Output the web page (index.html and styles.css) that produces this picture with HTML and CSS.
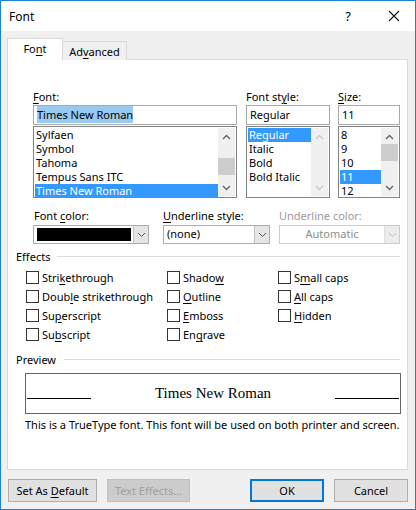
FILE: index.html
```html
<!DOCTYPE html>
<html>
<head>
<meta charset="utf-8">
<link rel="stylesheet" href="styles.css">
</head>
<body>
<div class="window">
  <div class="titlebar">
    <span class="title">Font</span>
    <span class="help">?</span>
    <svg class="close" width="12" height="12" viewBox="0 0 12 12"><path d="M1 1 L11 11 M11 1 L1 11" stroke="#111" stroke-width="1.1" fill="none"/></svg>
  </div>
  <div class="body">
    <div class="tabs">
      <div class="tab tab-active"><span>Fo<u>n</u>t</span></div>
      <div class="tab"><span>Ad<u>v</u>anced</span></div>
    </div>
    <div class="panel">
      <div class="row1">
        <div class="col col-font">
          <div class="label"><u>F</u>ont:</div>
          <div class="field"><span class="sel-text">Times New Roman</span></div>
          <div class="list">
            <div class="items">
              <div class="item">Sylfaen</div>
              <div class="item">Symbol</div>
              <div class="item">Tahoma</div>
              <div class="item">Tempus Sans ITC</div>
              <div class="item selected">Times New Roman</div>
            </div>
            <div class="scroll">
              <svg class="arrow" width="9" height="6" viewBox="0 0 9 6"><path d="M1 5 L4.5 1.5 L8 5" stroke="#606060" stroke-width="1.3" fill="none"/></svg>
              <div class="track"><div class="thumb thumb-font"></div></div>
              <svg class="arrow" width="9" height="6" viewBox="0 0 9 6"><path d="M1 1 L4.5 4.5 L8 1" stroke="#606060" stroke-width="1.3" fill="none"/></svg>
            </div>
          </div>
        </div>
        <div class="col col-style">
          <div class="label">Font st<u>y</u>le:</div>
          <div class="field">Regular</div>
          <div class="list">
            <div class="items">
              <div class="item selected">Regular</div>
              <div class="item">Italic</div>
              <div class="item">Bold</div>
              <div class="item">Bold Italic</div>
            </div>
            <div class="scroll">
              <svg class="arrow" width="9" height="6" viewBox="0 0 9 6"><path d="M1 5 L4.5 1.5 L8 5" stroke="#c8c8c8" stroke-width="1.3" fill="none"/></svg>
              <div class="track"></div>
              <svg class="arrow" width="9" height="6" viewBox="0 0 9 6"><path d="M1 1 L4.5 4.5 L8 1" stroke="#c8c8c8" stroke-width="1.3" fill="none"/></svg>
            </div>
          </div>
        </div>
        <div class="col col-size">
          <div class="label"><u>S</u>ize:</div>
          <div class="field">11</div>
          <div class="list">
            <div class="items">
              <div class="item">8</div>
              <div class="item">9</div>
              <div class="item">10</div>
              <div class="item selected">11</div>
              <div class="item">12</div>
            </div>
            <div class="scroll">
              <svg class="arrow" width="9" height="6" viewBox="0 0 9 6"><path d="M1 5 L4.5 1.5 L8 5" stroke="#606060" stroke-width="1.3" fill="none"/></svg>
              <div class="track"><div class="thumb thumb-size"></div></div>
              <svg class="arrow" width="9" height="6" viewBox="0 0 9 6"><path d="M1 1 L4.5 4.5 L8 1" stroke="#606060" stroke-width="1.3" fill="none"/></svg>
            </div>
          </div>
        </div>
      </div>

      <div class="row2">
        <div class="col col-color">
          <div class="label">Font <u>c</u>olor:</div>
          <div class="combo">
            <div class="combo-value"><div class="swatch"></div></div>
            <div class="combo-btn"><svg width="9" height="6" viewBox="0 0 9 6"><path d="M1 1 L4.5 4.5 L8 1" stroke="#555" stroke-width="1" fill="none"/></svg></div>
          </div>
        </div>
        <div class="col col-ustyle">
          <div class="label"><u>U</u>nderline style:</div>
          <div class="combo">
            <div class="combo-value combo-text">(none)</div>
            <div class="combo-btn"><svg width="9" height="6" viewBox="0 0 9 6"><path d="M1 1 L4.5 4.5 L8 1" stroke="#555" stroke-width="1" fill="none"/></svg></div>
          </div>
        </div>
        <div class="col col-ucolor">
          <div class="label disabled">Underline color:</div>
          <div class="combo combo-disabled">
            <div class="combo-value combo-center">Automatic</div>
            <div class="combo-btn"><svg width="9" height="6" viewBox="0 0 9 6"><path d="M1 1 L4.5 4.5 L8 1" stroke="#bdbdbd" stroke-width="1" fill="none"/></svg></div>
          </div>
        </div>
      </div>

      <div class="group-head head-effects"><span>Effects</span><div class="rule"></div></div>
      <div class="checks">
        <div class="check"><span class="box"></span><span>Stri<u>k</u>ethrough</span></div>
        <div class="check"><span class="box"></span><span>Shado<u>w</u></span></div>
        <div class="check"><span class="box"></span><span>S<u>m</u>all caps</span></div>
        <div class="check"><span class="box"></span><span>Doub<u>l</u>e strikethrough</span></div>
        <div class="check"><span class="box"></span><span><u>O</u>utline</span></div>
        <div class="check"><span class="box"></span><span><u>A</u>ll caps</span></div>
        <div class="check"><span class="box"></span><span>Su<u>p</u>erscript</span></div>
        <div class="check"><span class="box"></span><span><u>E</u>mboss</span></div>
        <div class="check"><span class="box"></span><span><u>H</u>idden</span></div>
        <div class="check"><span class="box"></span><span>Su<u>b</u>script</span></div>
        <div class="check"><span class="box"></span><span>En<u>g</u>rave</span></div>
      </div>

      <div class="group-head head-preview"><span>Preview</span><div class="rule"></div></div>
      <div class="preview">
        <div class="pline"></div>
        <div class="ptext">Times New Roman</div>
        <div class="pline"></div>
      </div>
      <div class="caption">This is a TrueType font. This font will be used on both printer and screen.</div>
    </div>
    <div class="buttons">
      <div class="btn btn-default"><span>Set As <u>D</u>efault</span></div>
      <div class="btn btn-effects"><span>Text Effects...</span></div>
      <div class="spacer"></div>
      <div class="btn btn-ok"><span>OK</span></div>
      <div class="btn btn-cancel"><span>Cancel</span></div>
    </div>
  </div>
</div>
</body>
</html>
```
FILE: styles.css
```css
* { box-sizing: border-box; }
html, body { margin: 0; padding: 0; }
body {
  width: 416px;
  height: 510px;
  font-family: "Noto Sans", "Open Sans", sans-serif;
  font-size: 11px;
  color: #000;
  background: #fff;
}
u { text-decoration: underline; text-underline-offset: 2px; }

.window {
  width: 416px;
  height: 510px;
  border: 1px solid #1a83d6;
  background: #f0f0f0;
  display: flex;
  flex-direction: column;
}

.titlebar {
  height: 30px;
  background: #fff;
  display: flex;
  align-items: center;
  flex-shrink: 0;
}
.title { margin-left: 8px; font-size: 12px; margin-top: 1px; }
.help { margin-left: auto; font-size: 13px; margin-right: 37px; }
.close { margin-right: 15px; }

.body { padding: 7px 7px 0 6px; }

.tabs {
  display: flex;
  align-items: flex-end;
  height: 22px;
  margin-bottom: -1px;
}
.tab {
  height: 19px;
  width: 65px;
  border: 1px solid #d9d9d9;
  border-bottom: none;
  background: #f0f0f0;
  margin-left: -1px;
  display: flex;
  align-items: center;
  justify-content: center;
  line-height: 15px;
  padding-top: 1px;
}
.tab-active {
  height: 22px;
  width: 56px;
  margin-left: 0;
  background: #fff;
  position: relative;
  z-index: 1;
  padding-top: 0;
  padding-bottom: 2px;
}

.panel {
  width: 401px;
  height: 411px;
  border: 1px solid #d9d9d9;
  background: #fff;
  padding: 29px 0 0 25px;
}

.label { height: 15px; line-height: 15px; white-space: nowrap; }
.label.disabled { color: #9a9a9a; }

.row1 { display: flex; }
.col-font { width: 204px; }
.col-style { width: 84px; margin-left: 9px; }
.col-size { width: 62px; margin-left: 8px; }

.field {
  margin-top: 1px;
  height: 20px;
  border: 1px solid #a9a9a9;
  padding: 0 3px;
  line-height: 17px;
  white-space: nowrap;
}
.sel-text { background: #99c9ef; padding: 1px 0; }

.list {
  margin-top: 1px;
  height: 72px;
  border: 1px solid #828282;
  display: flex;
  padding: 1px;
}
.items { flex: 1; min-width: 0; }
.item {
  height: 14px;
  line-height: 14px;
  padding-left: 1px;
  white-space: nowrap;
}
.item.selected { background: #3399ff; color: #fff; }
.scroll {
  width: 17px;
  background: #f0f0f0;
  display: flex;
  flex-direction: column;
  align-items: center;
}
.arrow { margin: 6px 0 4px; flex-shrink: 0; }
.scroll .arrow:last-child { margin: 4px 0 5px; }
.track { flex: 1; width: 100%; }
.thumb { background: #cdcdcd; width: 100%; }
.thumb-font { margin-top: 14px; height: 17px; }
.thumb-size { margin-top: 0; height: 17px; }

.row2 { display: flex; margin-top: 10px; }
.col-color { width: 116px; }
.col-ustyle { width: 107px; margin-left: 14px; }
.col-ucolor { width: 121px; margin-left: 9px; }
.col-color .label { padding-left: 1px; }
.combo {
  margin-top: 2px;
  height: 19px;
  border: 1px solid #adadad;
  display: flex;
  background: #fff;
}
.combo-value { flex: 1; min-width: 0; padding: 2px; }
.combo-text { padding: 0 3px; line-height: 16px; }
.combo-center { padding: 0; text-align: center; line-height: 16px; color: #8d8d8d; }
.swatch { background: #000; height: 13px; margin-left: 1px; }
.combo-btn {
  width: 15px;
  background: #e5e5e5;
  border-left: 1px solid #c2c2c2;
  display: flex;
  align-items: center;
  justify-content: center;
}
.combo-disabled { border-color: #cccccc; }
.combo-disabled .combo-btn { background: #ececec; border-left-color: #e0e0e0; }

.group-head {
  display: flex;
  align-items: center;
  height: 15px;
  line-height: 15px;
  margin-left: -17px;
  width: 384px;
}
.group-head .rule { flex: 1; height: 1px; background: #dcdcdc; }
.head-effects { margin-top: 5px; }
.head-effects .rule { margin-left: 7px; }
.head-preview { margin-top: 8px; }
.head-preview .rule { margin-left: 8px; }

.checks {
  margin-top: 4px;
  margin-left: -7px;
  display: grid;
  grid-template-columns: 141px 111px 1fr;
  grid-auto-rows: 19px;
}
.check { display: flex; align-items: center; white-space: nowrap; }
.box {
  width: 13px;
  height: 13px;
  border: 1px solid #333;
  background: #fff;
  margin-right: 3px;
  flex-shrink: 0;
}

.preview {
  margin-top: 6px;
  margin-left: -8px;
  width: 376px;
  height: 41px;
  border: 1px solid #646464;
  display: flex;
  align-items: center;
  padding: 0 1px;
}
.pline { width: 64px; height: 1px; background: #000; margin-top: 10px; }
.ptext {
  flex: 1;
  text-align: center;
  font-family: "Liberation Serif", "Times New Roman", serif;
  font-size: 15px;
}
.caption { margin-top: 3px; margin-left: -8px; line-height: 15px; white-space: nowrap; }

.buttons { display: flex; margin-top: 9px; }
.btn {
  height: 23px;
  border: 1px solid #adadad;
  background: #e1e1e1;
  display: flex;
  align-items: center;
  justify-content: center;
  white-space: nowrap;
}
.btn-default { width: 89px; margin-left: 1px; }
.btn-effects { width: 83px; margin-left: 10px; background: #cccccc; border-color: #bfbfbf; color: #a0a0a0; }
.spacer { flex: 1; }
.btn-ok { width: 74px; border: 2px solid #0078d7; }
.btn-cancel { width: 74px; margin-left: 10px; }
```
